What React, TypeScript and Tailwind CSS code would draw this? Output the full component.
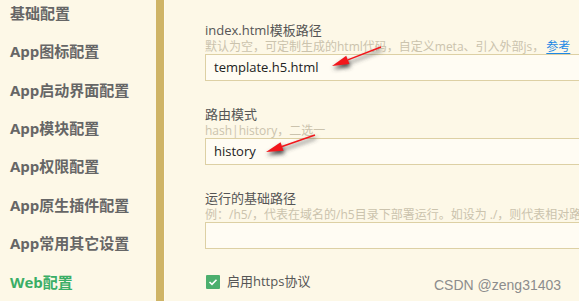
import React from "react";

const items = [
  "基础配置",
  "App图标配置",
  "App启动界面配置",
  "App模块配置",
  "App权限配置",
  "App原生插件配置",
  "App常用其它设置",
];

function Arrow({ x1, y1, x2, y2 }: { x1: number; y1: number; x2: number; y2: number }) {
  const ang = Math.atan2(y2 - y1, x2 - x1);
  const len = 17;
  const w = 4.5;
  const bx = x2 - Math.cos(ang) * len;
  const by = y2 - Math.sin(ang) * len;
  const px = -Math.sin(ang) * w;
  const py = Math.cos(ang) * w;
  const pts = `${x2},${y2} ${bx + px},${by + py} ${bx - px},${by - py}`;
  return (
    <g>
      <g filter="url(#sh)">
        <line x1={x1} y1={y1} x2={bx} y2={by} stroke="#444" strokeWidth="1.5" />
        <polygon points={pts} fill="#444" />
      </g>
      <line x1={x1} y1={y1} x2={bx} y2={by} stroke="#f2161b" strokeWidth="1.5" />
      <polygon points={pts} fill="#f2161b" />
    </g>
  );
}

function Field({ label, hint, value, link }: { label: string; hint: string; value?: string; link?: boolean }) {
  return (
    <div className="flex flex-col">
      <div className="h-[17px] text-[13px] leading-[17px] text-[#555] whitespace-nowrap">{label}</div>
      <div className="h-[15px] text-[12px] leading-[15px] text-[#cbc3ad] whitespace-nowrap">
        {hint}
        {link && <span className="text-[#1e88e5] underline underline-offset-2 ml-[2px]">参考</span>}
      </div>
      <div className="h-[27px] w-[420px] border border-[#ddd0a4] bg-[#fffcf3] flex items-center pl-[8px] text-[13px] text-[#222]">
        {value}
      </div>
    </div>
  );
}

export default function App() {
  return (
    <div
      className="relative w-[579px] h-[301px] overflow-hidden flex bg-[#fdf8e7]"
      style={{ fontFamily: '"Open Sans", "Noto Sans CJK SC", sans-serif' }}
    >
      <div className="w-[156px] shrink-0 flex flex-col pl-[10px] mt-[-6px]">
        {items.map((t) => (
          <div key={t} className="h-[39px] flex items-center text-[15px] font-bold text-[#666] whitespace-nowrap">
            {t}
          </div>
        ))}
        <div className="h-[39px] flex items-center text-[15px] font-bold text-[#3aae66]">Web配置</div>
      </div>
      <div className="w-[8px] shrink-0 bg-[#cfb466]" />
      <div className="w-[1px] shrink-0 bg-[#fffbee]" />
      <div className="flex-1 pl-[40px] pt-[22px] flex flex-col gap-[25px] overflow-hidden">
        <Field
          label="index.html模板路径"
          hint="默认为空，可定制生成的html代码，自定义meta、引入外部js，"
          value="template.h5.html"
          link
        />
        <Field label="路由模式" hint="hash|history，二选一" value="history" />
        <Field
          label="运行的基础路径"
          hint="例：/h5/，代表在域名的/h5目录下部署运行。如设为 ./，则代表相对路径"
        />
        <div className="flex items-center mt-[-2px] ml-[1px]">
          <div className="w-[14px] h-[14px] bg-[#4caf6e] rounded-[1px] flex items-center justify-center">
            <svg width="10" height="8" viewBox="0 0 10 8">
              <path d="M1.5 4 L4 6.3 L8.5 1.8" stroke="#fff" strokeWidth="1.6" fill="none" />
            </svg>
          </div>
          <span className="ml-[7px] text-[13px] text-[#555]">启用https协议</span>
        </div>
      </div>
      <div
        className="absolute left-[434px] top-[275px] text-[14px] text-[#8c8c8c]"
        style={{ fontFamily: '"Liberation Sans", Arial, sans-serif' }}
      >
        CSDN @zeng31403
      </div>
      <svg className="absolute left-0 top-0 pointer-events-none" width="579" height="301">
        <defs>
          <filter id="sh" x="-50%" y="-50%" width="200%" height="200%">
            <feGaussianBlur stdDeviation="2" />
            <feOffset dx="1" dy="3" />
          </filter>
        </defs>
        <Arrow x1={381} y1={47} x2={332} y2={66} />
        <Arrow x1={315} y1={135} x2={266} y2={152} />
      </svg>
    </div>
  );
}
